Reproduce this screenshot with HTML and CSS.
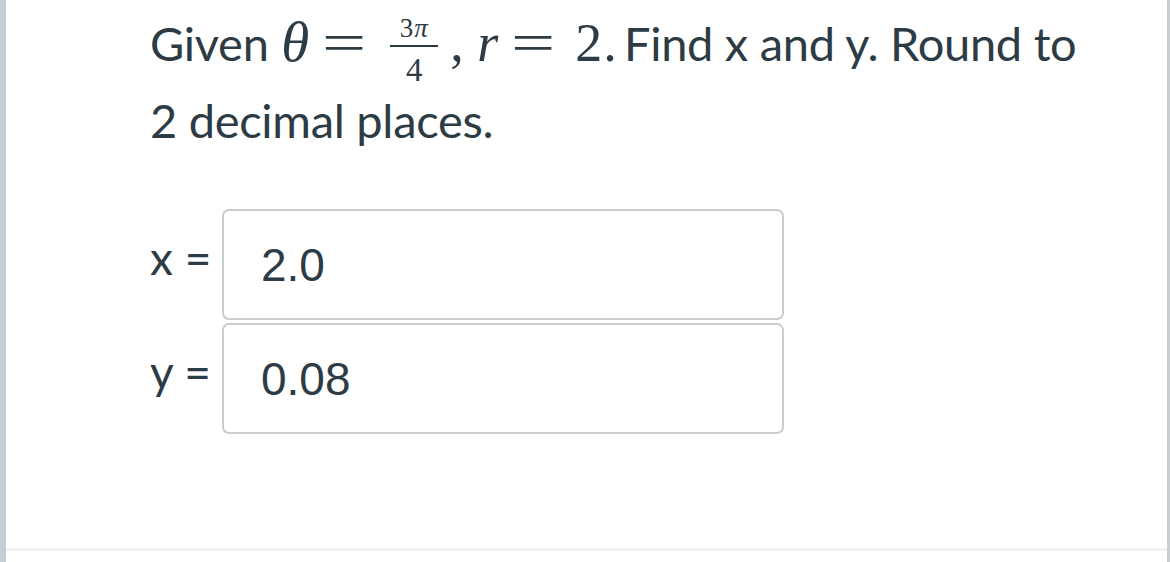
FILE: index.html
```html
<!DOCTYPE html>
<html>
<head>
<meta charset="utf-8">
<link rel="stylesheet" href="styles.css">
</head>
<body>
<div class="frame">
  <div class="content">
    <p class="question">Given <span class="math"><span class="atom theta">θ</span><span class="atom eq">=</span><span class="frac"><span class="num">3<span class="it">π</span></span><span class="bar"></span><span class="den">4</span></span><span class="atom comma">,</span><span class="atom var">r</span><span class="atom eq eq2">=</span><span class="atom two">2</span><span class="atom dot">.</span></span> Find x and y. Round to 2 decimal places.</p>
    <div class="answers">
      <div class="row">
        <span class="label">x =</span>
        <div class="box">2.0</div>
      </div>
      <div class="row">
        <span class="label">y =</span>
        <div class="box">0.08</div>
      </div>
    </div>
  </div>
  <div class="rule"></div>
</div>
</body>
</html>
```
FILE: styles.css
```css
html, body {
  margin: 0;
  padding: 0;
  background: #ffffff;
}
.frame {
  height: 562px;
  box-sizing: border-box;
  border-left: 6px solid #c8cdd2;
  border-right: 3px solid #c8cdd2;
  display: flex;
  flex-direction: column;
}
.content {
  flex: 1;
  padding-left: 144px;
  color: #2d3b45;
  font-family: Lato, "Noto Sans", sans-serif;
}
.question {
  margin: 0;
  padding-top: 6px;
  font-size: 47px;
  line-height: 75px;
  width: 945px;
  letter-spacing: -0.3px;
}
.math {
  font-family: "Liberation Serif", "DejaVu Serif", serif;
  letter-spacing: 0;
  margin-left: 1px;
}
.atom {
  display: inline-block;
  font-size: 54px;
  line-height: 50px;
}
.theta {
  font-style: italic;
  font-size: 57px;
  width: 44px;
}
.eq {
  width: 65px;
  text-indent: -2px;
  transform: scaleX(1.45);
  transform-origin: left center;
}
.eq2 {
  width: 61px;
}
.comma {
  width: 27px;
}
.var {
  font-style: italic;
  width: 37px;
}
.two {
  width: 28px;
}
.dot {
  width: 9px;
}
.it {
  font-style: italic;
}
.frac {
  display: inline-flex;
  flex-direction: column;
  width: 60px;
  vertical-align: 24px;
}
.num {
  width: 48px;
  text-align: center;
  font-size: 27px;
  line-height: 20px;
  letter-spacing: 1px;
}
.bar {
  width: 48px;
  height: 2px;
  margin-top: 7px;
  background: #2d3b45;
}
.den {
  width: 48px;
  text-align: center;
  font-size: 33px;
  line-height: 32px;
  position: relative;
  top: 7px;
}
.answers {
  margin-top: 51px;
  display: flex;
  flex-direction: column;
  gap: 3px;
}
.row {
  display: flex;
  align-items: center;
}
.label {
  width: 57px;
  text-align: right;
  font-family: Lato, sans-serif;
  font-size: 46px;
  line-height: 54px;
  margin-right: 15px;
  margin-bottom: 14px;
  white-space: nowrap;
}
.box {
  box-sizing: border-box;
  width: 562px;
  height: 111px;
  border: 2px solid #c8cdd2;
  border-radius: 7px;
  display: flex;
  align-items: center;
  padding-left: 37px;
  font-family: "Liberation Sans", Arial, sans-serif;
  font-size: 46px;
  color: #2d3b45;
}
.rule {
  height: 3px;
  background: #f2f2f2;
  margin-bottom: 11px;
}
```
